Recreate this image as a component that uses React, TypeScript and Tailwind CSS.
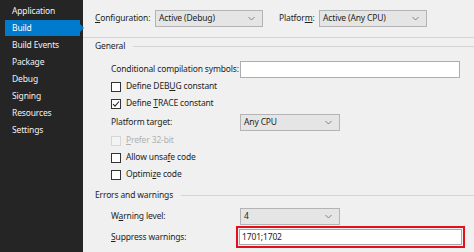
const font = { fontFamily: '"Noto Sans", "Open Sans", sans-serif' };

const navItems = ["Application", "Build", "Build Events", "Package", "Debug", "Signing", "Resources", "Settings"];

function Chevron() {
  return (
    <svg width="7" height="5" viewBox="0 0 7 5" className="shrink-0">
      <path d="M0.5 1 L3.5 4 L6.5 1" fill="none" stroke="#808080" strokeWidth="1" />
    </svg>
  );
}

function Select({ value, width }: { value: string; width: string }) {
  return (
    <div className={`${width} h-[17px] bg-[#e5e5e5] border border-[#b4b4b4] flex items-center justify-between pl-[3px] pr-[7px]`}>
      <span>{value}</span>
      <Chevron />
    </div>
  );
}

function Check({ checked, disabled, label }: { checked?: boolean; disabled?: boolean; label: React.ReactNode }) {
  return (
    <div className={`h-[17px] flex items-center gap-[5px] ${disabled ? "text-[#b0b0b0]" : ""}`}>
      <div
        className={`w-[10px] h-[10px] border flex items-center justify-center ${
          disabled ? "border-[#d6d6d6] bg-[#f3f3f3]" : "border-[#333333] bg-white"
        }`}
      >
        {checked && (
          <svg width="8" height="8" viewBox="0 0 8 8">
            <path d="M1 4 L3 6.2 L7 1.5" fill="none" stroke="#222" strokeWidth="1.1" />
          </svg>
        )}
      </div>
      <span>{label}</span>
    </div>
  );
}

function GroupHeader({ title, h }: { title: string; h: string }) {
  return (
    <div className={`${h} flex items-center gap-[8px] pl-[12px]`}>
      <span>{title}</span>
      <div className="flex-1 h-px bg-[#d4d4d4]" />
    </div>
  );
}

export default function App() {
  return (
    <div
      className="w-[474px] h-[252px] flex bg-[#f0f0f0] text-[8.5px] tracking-[-0.15px] whitespace-nowrap text-[#1e1e1e] overflow-hidden"
      style={font}
    >
      {/* Sidebar */}
      <div className="w-[83px] shrink-0 bg-[#252526] text-[#f1f1f1] pt-[3px]">
        {navItems.map((item) => (
          <div key={item} className="h-[17px] relative">
            {item === "Build" ? (
              <div className="ml-[5px] mr-[3px] h-[16px] bg-[#007acc] flex items-center pl-[7px] text-white relative">
                {item}
                <div className="absolute right-[-4px] top-[4px] w-0 h-0 border-y-[4px] border-y-transparent border-l-[4px] border-l-[#007acc]" />
              </div>
            ) : (
              <div className="h-full flex items-center pl-[12px]">{item}</div>
            )}
          </div>
        ))}
      </div>

      {/* Main */}
      <div className="flex-1 flex flex-col">
        {/* Configuration bar */}
        <div className="h-[38px] shrink-0 flex items-center pl-[12px] border-b border-[#d4d4d4]">
          <span className="w-[60px]">
            <u>C</u>onfiguration:
          </span>
          <Select value="Active (Debug)" width="w-[108px]" />
          <span className="ml-[16px] w-[40px]">
            Platfor<u>m</u>:
          </span>
          <Select value="Active (Any CPU)" width="w-[108px]" />
        </div>

        <GroupHeader title="General" h="h-[17px]" />

        <div className="pl-[28px] pr-[14px] flex flex-col">
          <div className="h-[18px] mt-[5px] flex items-center">
            <span className="w-[129px] shrink-0">Conditional compilation symbols:</span>
            <div className="flex-1 h-[17px] bg-white border border-[#abadb3]" />
          </div>
          <Check label={<>Define DEB<u>U</u>G constant</>} />
          <Check checked label={<>Define <u>T</u>RACE constant</>} />
          <div className="h-[20px] flex items-center">
            <span className="w-[129px] shrink-0">Platform target:</span>
            <Select value="Any CPU" width="w-[100px]" />
          </div>
          <Check disabled label={<><u>P</u>refer 32-bit</>} />
          <Check label={<>Allow unsa<u>f</u>e code</>} />
          <Check label={<>Optimi<u>z</u>e code</>} />
        </div>

        <GroupHeader title="Errors and warnings" h="h-[24px]" />

        <div className="pl-[28px] pr-[9px] flex flex-col">
          <div className="h-[19px] flex items-center">
            <span className="w-[129px] shrink-0">
              W<u>a</u>rning level:
            </span>
            <Select value="4" width="w-[100px]" />
          </div>
          <div className="h-[22px] flex items-center">
            <span className="w-[125px] shrink-0">
              <u>S</u>uppress warnings:
            </span>
            <div className="flex-1 h-[22px] border-2 border-[#e2101b] p-px">
              <div className="h-full bg-white border border-[#a8a8a8] flex items-center pl-[2px]">1701;1702</div>
            </div>
          </div>
        </div>
      </div>
    </div>
  );
}
